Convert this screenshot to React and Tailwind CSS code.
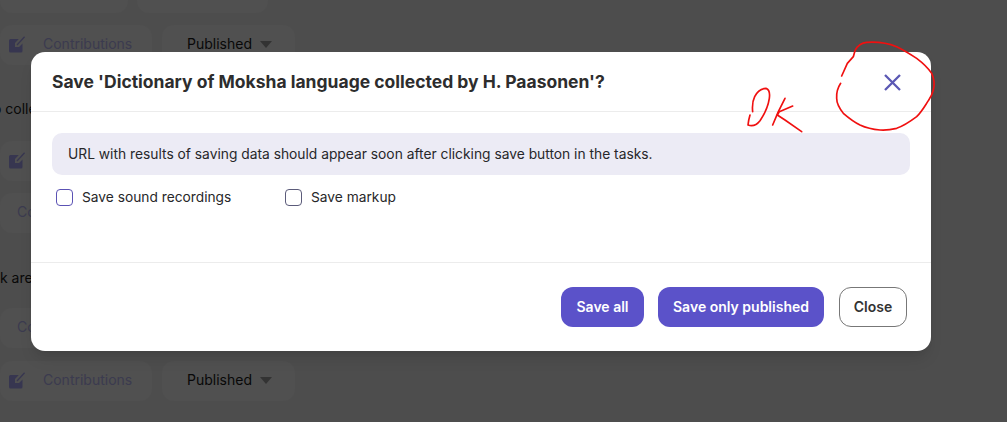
import React from "react";

function EditIcon() {
  return (
    <svg width="17" height="17" viewBox="0 0 17 17" className="shrink-0">
      <path d="M1.5 3h8.3L6 7v4h4l3.5-3.5v7.5a1.5 1.5 0 0 1-1.5 1.5H1.5A1.5 1.5 0 0 1 0 15V4.5A1.5 1.5 0 0 1 1.5 3z" fill="#6f6da0" />
      <path d="M8 9 15.6.8" stroke="#6f6da0" strokeWidth="1.3" fill="none" />
    </svg>
  );
}

function Row({ icon = true, published = true, className = "" }) {
  return (
    <div className={`flex gap-[10px] h-10 shrink-0 ${className}`}>
      <div className="w-[152px] bg-[#a0a0a0] rounded-xl flex items-center pl-[9px] pb-[2px] shrink-0">
        {icon ? <EditIcon /> : <span className="w-[8px]" />}
        <span className={`${icon ? "ml-[17px]" : ""} text-sm text-[#77769e]`}>Contributions</span>
      </div>
      <div className="w-[133px] bg-[#a0a0a0] rounded-xl flex items-center pl-[25px] pb-[2px] gap-[8px] shrink-0">
        {published && (
          <>
            <span className="text-sm text-[#111]">Published</span>
            <span className="w-0 h-0 border-x-[6px] border-x-transparent border-t-[7px] border-t-[#666]" />
          </>
        )}
      </div>
    </div>
  );
}

export default function App() {
  return (
    <div className="relative w-[1007px] h-[422px] overflow-hidden bg-[#9b9b9b] font-['Inter',sans-serif]">
      <div className="flex flex-col h-[422px]">
        <div className="flex gap-[9px] h-[13px] shrink-0">
          <div className="w-[128px] bg-[#a0a0a0] rounded-b-xl" />
          <div className="w-[131px] bg-[#a0a0a0] rounded-b-xl" />
        </div>
        <Row className="mt-[12px]" />
        <div className="h-[76px] shrink-0 flex items-center text-sm text-[#111] pt-[11px] -ml-[7px] whitespace-nowrap">o collected</div>
        <Row />
        <Row icon={false} published={false} className="mt-[12px]" />
        <div className="h-[75px] shrink-0 flex items-center text-sm text-[#111] pt-[14px] whitespace-nowrap">k are</div>
        <Row icon={false} published={false} />
        <Row className="mt-[13px]" />
      </div>

      <div className="absolute inset-0 bg-black/50 flex items-start justify-start pt-[52px] pl-[31px]">
        <div className="w-[900px] h-[299px] bg-white rounded-[14px] flex flex-col shadow-lg">
          <div className="h-[60px] pt-[2px] border-b border-[#ececec] flex items-center justify-between pl-[21px] pr-[30px] shrink-0">
            <h2 className="text-[17.5px] font-bold text-[#2d2d2d]">
              Save 'Dictionary of Moksha language collected by H. Paasonen'?
            </h2>
            <svg width="17" height="17" viewBox="0 0 17 17" fill="none" stroke="#5b58b4" strokeWidth="2.3" className="shrink-0">
              <path d="M1 1 16 16M16 1 1 16" />
            </svg>
          </div>
          <div className="flex-1 px-[21px] pt-[21px]">
            <div className="h-[42px] rounded-[10px] bg-[#ecebf5] flex items-center pl-[16px] text-[13.8px] text-[#27272a]">
              URL with results of saving data should appear soon after clicking save button in the tasks.
            </div>
            <div className="flex items-center mt-[12px] pl-[4px] text-[13.75px] text-[#27272a]">
              <label className="flex items-center gap-[9px] w-[229px]">
                <span className="w-[17px] h-[17px] rounded-[4px] border border-[#5b52b4] bg-white" />
                Save sound recordings
              </label>
              <label className="flex items-center gap-[9px]">
                <span className="w-[17px] h-[17px] rounded-[4px] border border-[#5b5b7a] bg-white" />
                Save markup
              </label>
            </div>
          </div>
          <div className="h-[89px] border-t border-[#ececec] flex items-start justify-end pt-[24px] pr-[24px] shrink-0 text-sm font-semibold">
            <button className="w-[83px] h-10 rounded-xl bg-[#5b52c9] text-white">Save all</button>
            <button className="w-[166px] h-10 rounded-xl bg-[#5b52c9] text-white ml-[14px]">Save only published</button>
            <button className="w-[68px] h-10 rounded-xl bg-white border border-[#777] text-[#333] ml-[15px]">Close</button>
          </div>
        </div>
      </div>

      <svg width="240" height="120" viewBox="0 0 720 360" fill="none" stroke="#f01010" strokeWidth="5" strokeLinecap="round" strokeLinejoin="round" className="absolute left-[720px] top-[30px]">
        <path d="M365 138 382 100 400 80 405 62C412 48 420 38 440 37C470 35 505 40 530 50C555 62 575 75 590 85C610 100 625 115 635 130C642 145 645 160 640 180C636 195 632 203 625 212C612 232 605 245 590 260C570 275 550 288 530 295C510 300 495 301 480 300C455 298 435 292 420 285C400 275 385 263 370 250C358 235 350 222 350 205C349 190 352 175 362 160" />
        <path d="M98 245C96 225 98 212 104 200C110 188 122 176 138 175C148 178 150 190 148 205C145 225 135 250 120 272C110 285 98 290 84 285C85 275 87 265 90 255" />
        <path d="M195 205 175 245 158 285" />
        <path d="M218 228 178 245 172 255 195 270 245 305" />
      </svg>
    </div>
  );
}
